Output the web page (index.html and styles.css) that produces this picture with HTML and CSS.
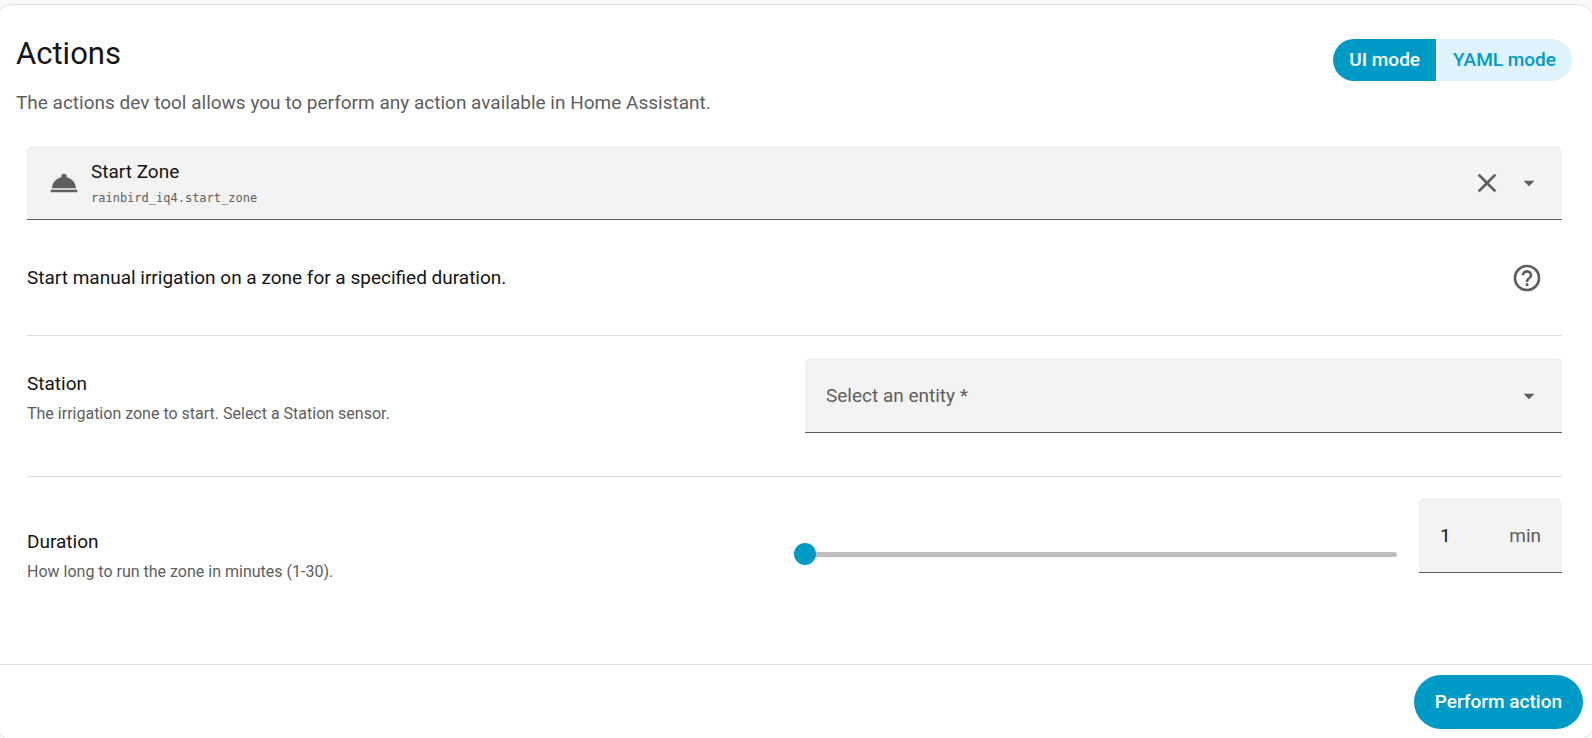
FILE: index.html
```html
<!DOCTYPE html>
<html lang="en">
<head>
<meta charset="utf-8">
<meta name="viewport" content="width=device-width, initial-scale=1">
<title>Actions</title>
<link rel="stylesheet" href="styles.css">
</head>
<body>
<main class="card">
  <header class="card-header">
    <div class="intro">
      <h1 class="title">Actions</h1>
      <p class="subtitle">The actions dev tool allows you to perform any action available in Home Assistant.</p>
    </div>
    <div class="mode-toggle" role="group" aria-label="Editor mode">
      <button type="button" class="mode mode-active" aria-pressed="true">UI mode</button>
      <button type="button" class="mode" aria-pressed="false">YAML mode</button>
    </div>
  </header>

  <div class="content">
    <div class="field picker">
      <button type="button" class="picker-value" aria-haspopup="listbox">
        <svg class="icon" viewBox="0 0 24 24" aria-hidden="true"><path d="M12 5A2 2 0 0 1 14 7C14 7.24 13.96 7.47 13.88 7.69C17.95 8.5 21 11.91 21 16H3C3 11.91 6.05 8.5 10.12 7.69C10.04 7.47 10 7.24 10 7A2 2 0 0 1 12 5M22 19H2V17H22V19Z"/></svg>
        <span class="picker-text">
          <span class="picker-name">Start Zone</span>
          <code class="picker-id">rainbird_iq4.start_zone</code>
        </span>
      </button>
      <button type="button" class="icon-button" aria-label="Clear">
        <svg class="icon" viewBox="0 0 24 24" aria-hidden="true"><path d="M19,6.41L17.59,5L12,10.59L6.41,5L5,6.41L10.59,12L5,17.59L6.41,19L12,13.41L17.59,19L19,17.59L13.41,12L19,6.41Z"/></svg>
      </button>
      <svg class="caret" viewBox="0 0 24 24" aria-hidden="true"><path d="M7,10L12,15L17,10H7Z"/></svg>
    </div>

    <div class="description">
      <p class="description-text">Start manual irrigation on a zone for a specified duration.</p>
      <a href="#help" class="icon-button" aria-label="Help">
        <svg class="icon" viewBox="0 0 24 24" aria-hidden="true"><path d="M11,18H13V16H11V18M12,2A10,10 0 0,0 2,12A10,10 0 0,0 12,22A10,10 0 0,0 22,12A10,10 0 0,0 12,2M12,20C7.59,20 4,16.41 4,12C4,7.59 7.59,4 12,4C16.41,4 20,7.59 20,12C20,16.41 16.41,20 12,20M12,6A4,4 0 0,0 8,10H10A2,2 0 0,1 12,8A2,2 0 0,1 14,10C14,12 11,11.75 11,15H13C13,12.75 16,12.5 16,10A4,4 0 0,0 12,6Z"/></svg>
      </a>
    </div>

    <div class="row">
      <div class="row-text">
        <label class="row-label" for="station">Station</label>
        <p class="row-help">The irrigation zone to start. Select a Station sensor.</p>
      </div>
      <div class="field select-field">
        <select id="station" class="select" required>
          <option value="">Select an entity *</option>
        </select>
        <svg class="caret" viewBox="0 0 24 24" aria-hidden="true"><path d="M7,10L12,15L17,10H7Z"/></svg>
      </div>
    </div>

    <div class="row row-duration">
      <div class="row-text">
        <label class="row-label" for="duration">Duration</label>
        <p class="row-help">How long to run the zone in minutes (1-30).</p>
      </div>
      <div class="duration">
        <div class="slider">
          <input id="duration" class="range" type="range" min="1" max="30" value="1">
        </div>
        <div class="field number-field">
          <input id="minutes" class="number" type="text" inputmode="numeric" value="1" aria-label="Duration in minutes">
          <label class="unit" for="minutes">min</label>
        </div>
      </div>
    </div>
  </div>

  <footer class="card-footer">
    <button type="button" class="perform">Perform action</button>
  </footer>
</main>
</body>
</html>
```

FILE: styles.css
```css
* {
  box-sizing: border-box;
}

body {
  margin: 0;
  padding-top: 4px;
  overflow: hidden;
  background: #fafafa;
  color: #141414;
  font-family: Roboto, sans-serif;
  font-size: 19px;
  line-height: 28px;
}

h1,
p {
  margin: 0;
  font-weight: 400;
}

button,
input,
select {
  margin: 0;
  padding: 0;
  border: 0;
  background: none;
  color: inherit;
  font: inherit;
}

.card {
  margin: 0 -2px 0 -5px;
  border: 1px solid #e0e0e0;
  border-radius: 16px;
  background: #fff;
}

.card-header {
  display: flex;
  justify-content: space-between;
  align-items: flex-start;
  padding: 29px 21px 0 20px;
}

.title {
  font-size: 31px;
  line-height: 40px;
}

.subtitle {
  margin-top: 15px;
  color: #5e5e5e;
}

.mode-toggle {
  display: flex;
  gap: 1px;
  margin-top: 5px;
  border-radius: 21px;
  overflow: hidden;
}

.mode {
  height: 42px;
  padding: 0 16px;
  background: #dff3fc;
  color: #009ac7;
  font-weight: 500;
}

.mode-active {
  background: #009ac7;
  color: #fff;
}

.content {
  padding: 29px 31px 0;
}

.field {
  display: flex;
  align-items: center;
  height: 75px;
  border-bottom: 1px solid #5e5e5e;
  border-radius: 5px 5px 0 0;
  background: #f3f3f3;
}

.icon {
  display: block;
  width: 32px;
  height: 32px;
  fill: #5e5e5e;
}

.caret {
  width: 26px;
  height: 26px;
  fill: #5e5e5e;
  pointer-events: none;
}

.picker {
  height: 74px;
  padding: 0 20px 0 21px;
}

.picker-value {
  display: flex;
  flex: 1;
  align-items: center;
  gap: 11px;
  text-align: left;
}

.picker-text {
  display: flex;
  flex-direction: column;
  padding-top: 2px;
}

.picker-id {
  color: #5e5e5e;
  font-family: "DejaVu Sans Mono", monospace;
  font-size: 12px;
  line-height: 24px;
}

.icon-button {
  margin-right: 13px;
}

.description {
  display: flex;
  align-items: center;
  justify-content: space-between;
  height: 115px;
  padding-right: 6px;
}

.row {
  display: grid;
  grid-template-columns: 1fr 1fr;
  gap: 21px;
  padding: 22px 0 43px;
  border-top: 1px solid #e0e0e0;
}

.row-text {
  padding-top: 12px;
}

.row-label {
  display: block;
}

.row-help {
  color: #5e5e5e;
  font-size: 16px;
  line-height: 32px;
}

.select-field {
  display: grid;
  align-items: center;
}

.select {
  grid-area: 1 / 1;
  width: 100%;
  height: 74px;
  padding: 2px 56px 0 21px;
  appearance: none;
  color: #5e5e5e;
}

.select-field .caret {
  grid-area: 1 / 1;
  justify-self: end;
  margin: 2px 20px 0 0;
}

.row-duration {
  padding: 21px 0 76px;
}

.row-duration .row-text {
  padding-top: 30px;
}

.duration {
  display: flex;
  align-items: flex-start;
  gap: 22px;
}

.slider {
  display: grid;
  flex: 1;
  align-items: center;
  padding-top: 45px;
}

.slider::before {
  content: "";
  grid-area: 1 / 1;
  height: 5px;
  border-radius: 3px;
  background: #bdbdbd;
}

.range {
  grid-area: 1 / 1;
  height: 22px;
  margin: 0 -11px;
  appearance: none;
}

.range::-webkit-slider-thumb {
  width: 22px;
  height: 22px;
  border-radius: 50%;
  appearance: none;
  background: #009ac7;
}

.number-field {
  width: 143px;
  padding: 2px 21px 0;
}

.number {
  flex: 1;
  min-width: 0;
}

.unit {
  color: #5e5e5e;
}

.card-footer {
  display: flex;
  justify-content: flex-end;
  padding: 10px;
  border-top: 1px solid #e0e0e0;
}

.perform {
  height: 54px;
  padding: 0 21px;
  border-radius: 27px;
  background: #009ac7;
  color: #fff;
  font-weight: 500;
}
```
